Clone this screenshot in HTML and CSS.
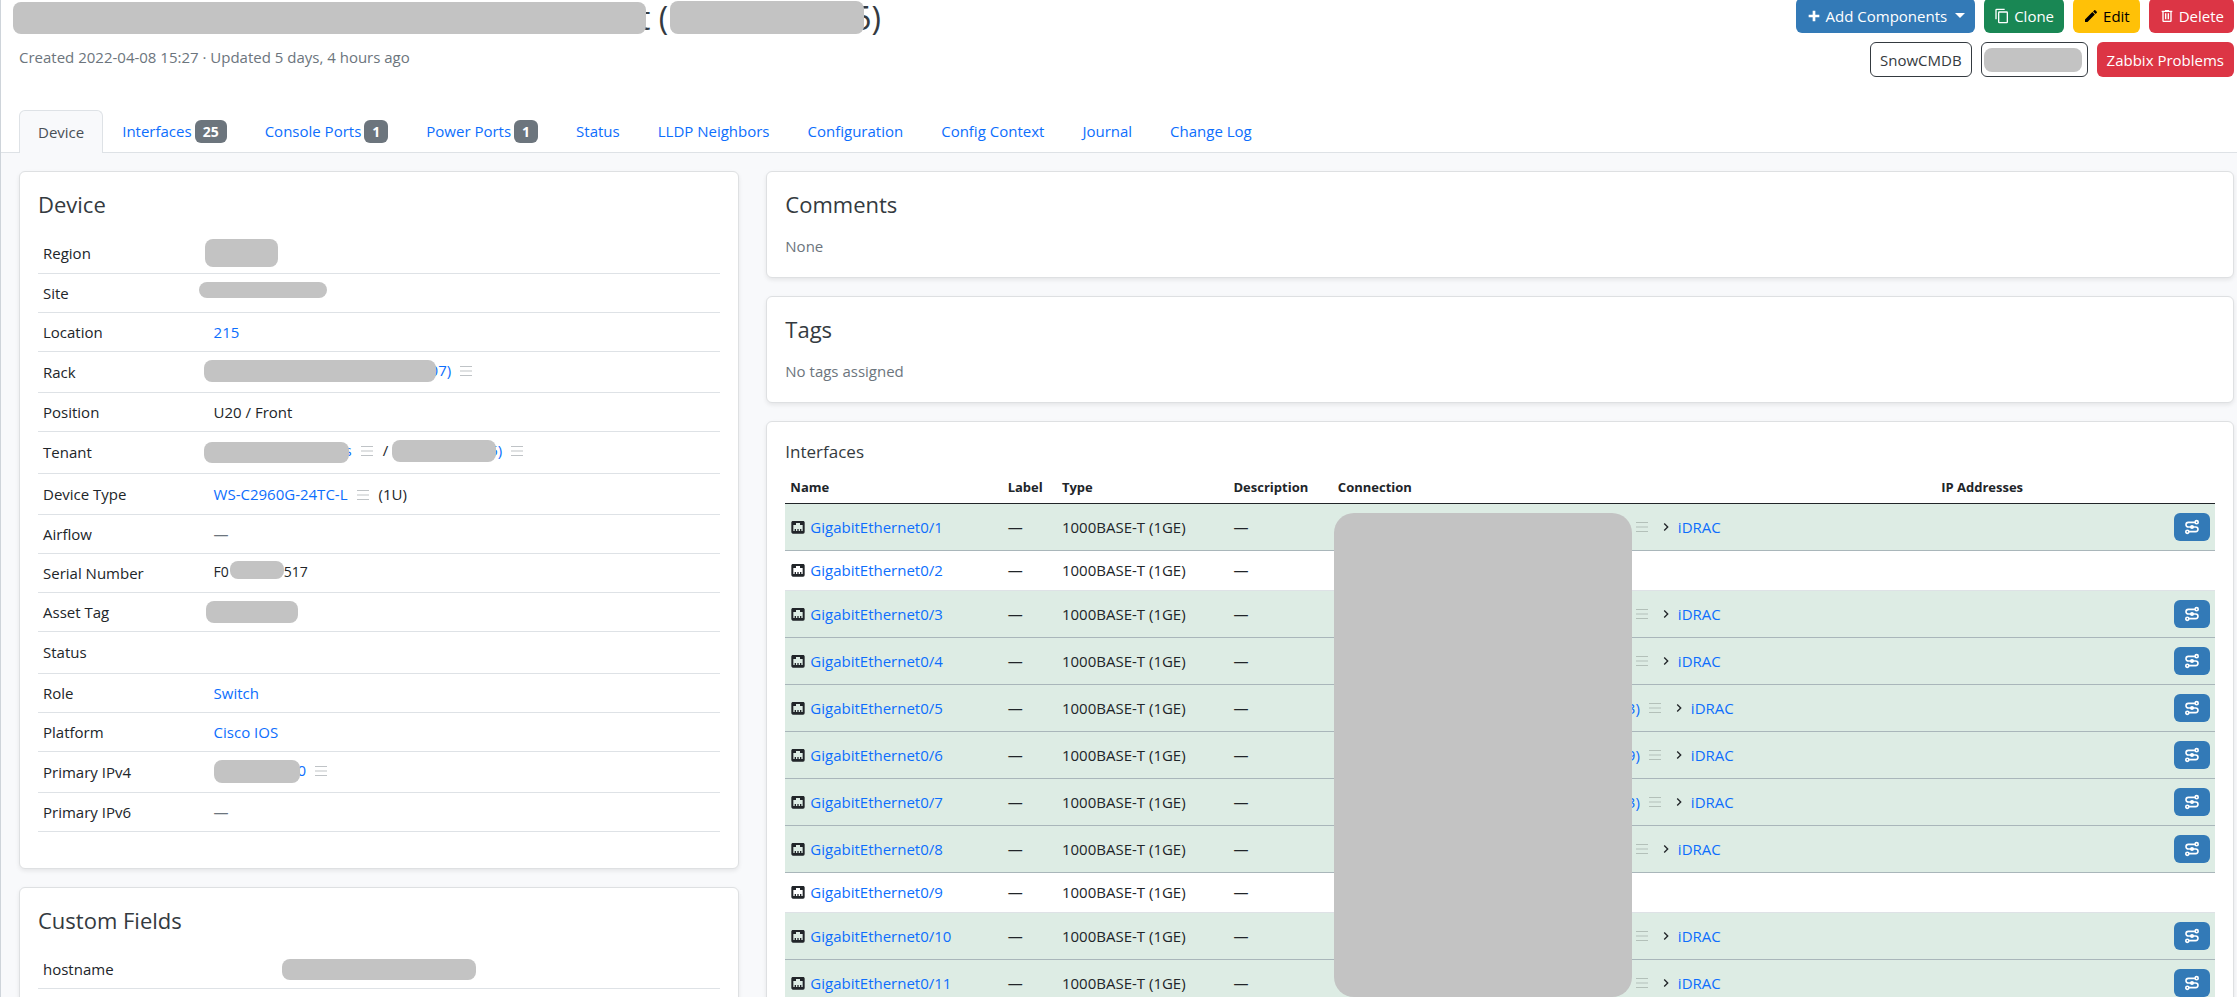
FILE: index.html
```html
<!DOCTYPE html>
<html lang="en">
<head>
<meta charset="utf-8">
<title>Device</title>
<link rel="stylesheet" href="styles.css">
</head>
<body>
<svg class="defs" aria-hidden="true">
  <symbol id="plus" viewBox="0 0 24 24"><path d="M20 14H14V20H10V14H4V10H10V4H14V10H20V14Z"/></symbol>
  <symbol id="copy" viewBox="0 0 24 24"><path d="M19,21H8V7H19M19,5H8A2,2 0 0,0 6,7V21A2,2 0 0,0 8,23H19A2,2 0 0,0 21,21V7A2,2 0 0,0 19,5M16,1H4A2,2 0 0,0 2,3V17H4V3H16V1Z"/></symbol>
  <symbol id="pencil" viewBox="0 0 24 24"><path d="M20.71,7.04C21.1,6.65 21.1,6 20.71,5.63L18.37,3.29C18,2.9 17.35,2.9 16.96,3.29L15.12,5.12L18.87,8.87M3,17.25V21H6.75L17.81,9.93L14.06,6.18L3,17.25Z"/></symbol>
  <symbol id="trash" viewBox="0 0 24 24"><path d="M9,3V4H4V6H5V19A2,2 0 0,0 7,21H17A2,2 0 0,0 19,19V6H20V4H15V3H9M7,6H17V19H7V6M9,8V17H11V8H9M13,8V17H15V8H13Z"/></symbol>
  <symbol id="ethernet" viewBox="0 0 24 24"><path d="M7,15H9V18H11V15H13V18H15V15H17V18H19V9H15V6H9V9H5V18H7V15M4.38,3H19.63C20.94,3 22,4.06 22,5.38V19.63A2.37,2.37 0 0,1 19.63,22H4.38C3.06,22 2,20.94 2,19.63V5.38C2,4.06 3.06,3 4.38,3Z"/></symbol>
  <symbol id="chevron" viewBox="0 0 24 24"><path d="M8.59,16.58L13.17,12L8.59,7.41L10,6L16,12L10,18L8.59,16.58Z"/></symbol>
  <symbol id="lines" viewBox="0 0 12 10"><path d="M0 0H12V1H0Z"/><path opacity=".5" d="M0 4H12V6H0Z"/><path d="M0 9H12V10H0Z"/></symbol>
  <symbol id="trace" viewBox="0 0 24 24"><g fill="none" stroke="currentColor" stroke-width="2.4"><path d="M16.5 5H6.500A3.500 3.500 0 0 0 6.500 12H17.500A3.500 3.500 0 0 1 17.500 19H7.500"/><circle cx="19" cy="4.800" r="2.300"/><circle cx="5" cy="19.200" r="2.300"/></g><circle cx="12" cy="12" r="3"/></symbol>
</svg>
<div class="page">
  <header class="top">
    <div class="heading">
      <h1><span class="mask mask-name"></span>t (<span class="mask mask-id"></span>5)</h1>
      <p class="muted">Created 2022-04-08 15:27 · Updated 5 days, 4 hours ago</p>
    </div>
    <div class="actions">
      <div class="buttons">
        <button class="btn blue"><svg class="icon"><use href="#plus"/></svg>Add Components<span class="caret"></span></button>
        <button class="btn green"><svg class="icon"><use href="#copy"/></svg>Clone</button>
        <button class="btn yellow"><svg class="icon"><use href="#pencil"/></svg>Edit</button>
        <button class="btn red"><svg class="icon"><use href="#trash"/></svg>Delete</button>
      </div>
      <div class="buttons">
        <a class="btn outline" href="#">SnowCMDB</a>
        <a class="btn outline masked" href="#" aria-label="External link"><span class="mask mask-button"></span></a>
        <a class="btn red" href="#">Zabbix Problems</a>
      </div>
    </div>
  </header>
  <nav class="tabs">
    <a class="tab active" href="#">Device</a>
    <a class="tab" href="#">Interfaces <span class="badge">25</span></a>
    <a class="tab" href="#">Console Ports <span class="badge">1</span></a>
    <a class="tab" href="#">Power Ports <span class="badge">1</span></a>
    <a class="tab" href="#">Status</a>
    <a class="tab" href="#">LLDP Neighbors</a>
    <a class="tab" href="#">Configuration</a>
    <a class="tab" href="#">Config Context</a>
    <a class="tab" href="#">Journal</a>
    <a class="tab" href="#">Change Log</a>
  </nav>
  <main class="content">
    <div class="column side">
      <section class="card device">
        <h2>Device</h2>
        <table class="attrs">
          <tr><th scope="row">Region</th><td><span class="mask mask-region"></span></td></tr>
          <tr><th scope="row">Site</th><td><span class="mask mask-site"></span></td></tr>
          <tr><th scope="row">Location</th><td><a href="#">215</a></td></tr>
          <tr class="tall"><th scope="row">Rack</th><td><span class="mask mask-rack"></span><a href="#">07)</a><svg class="grip"><use href="#lines"/></svg></td></tr>
          <tr><th scope="row">Position</th><td>U20 / Front</td></tr>
          <tr class="taller"><th scope="row">Tenant</th><td><span class="mask mask-group"></span><a href="#">s</a><svg class="grip"><use href="#lines"/></svg>/ <span class="mask mask-tenant"></span><a href="#">5)</a><svg class="grip"><use href="#lines"/></svg></td></tr>
          <tr class="tall"><th scope="row">Device Type</th><td><a href="#">WS-C2960G-24TC-L</a><svg class="grip"><use href="#lines"/></svg>(1U)</td></tr>
          <tr><th scope="row">Airflow</th><td class="muted">—</td></tr>
          <tr><th scope="row">Serial Number</th><td class="serial">F0<span class="mask mask-serial"></span>517</td></tr>
          <tr><th scope="row">Asset Tag</th><td><span class="mask mask-asset"></span></td></tr>
          <tr class="taller"><th scope="row">Status</th><td></td></tr>
          <tr><th scope="row">Role</th><td><a href="#">Switch</a></td></tr>
          <tr><th scope="row">Platform</th><td><a href="#">Cisco IOS</a></td></tr>
          <tr class="tall"><th scope="row">Primary IPv4</th><td><span class="mask mask-ip"></span><a href="#">0</a><svg class="grip"><use href="#lines"/></svg></td></tr>
          <tr><th scope="row">Primary IPv6</th><td class="muted">—</td></tr>
        </table>
      </section>
      <section class="card">
        <h2>Custom Fields</h2>
        <table class="attrs custom">
          <tr><th scope="row">hostname</th><td><span class="mask mask-host"></span></td></tr>
        </table>
      </section>
    </div>
    <div class="column wide">
      <section class="card">
        <h2>Comments</h2>
        <p class="muted note">None</p>
      </section>
      <section class="card">
        <h2>Tags</h2>
        <p class="muted note">No tags assigned</p>
      </section>
      <section class="card">
        <h3>Interfaces</h3>
        <div class="grid-wrap">
          <table class="grid">
            <colgroup><col class="c-name"><col class="c-label"><col class="c-type"><col class="c-desc"><col class="c-conn"><col class="c-ip"></colgroup>
            <thead><tr><th>Name</th><th>Label</th><th>Type</th><th>Description</th><th>Connection</th><th>IP Addresses</th></tr></thead>
            <tbody>
              <tr class="up"><td><svg class="port"><use href="#ethernet"/></svg><a href="#">GigabitEthernet0/1</a></td><td>—</td><td>1000BASE-T (1GE)</td><td>—</td><td><div class="link"><svg class="grip"><use href="#lines"/></svg><svg class="chev"><use href="#chevron"/></svg><a href="#">iDRAC</a></div></td><td class="end"><button class="trace" aria-label="Trace"><svg><use href="#trace"/></svg></button></td></tr>
              <tr><td><svg class="port"><use href="#ethernet"/></svg><a href="#">GigabitEthernet0/2</a></td><td>—</td><td>1000BASE-T (1GE)</td><td>—</td><td></td><td></td></tr>
              <tr class="up"><td><svg class="port"><use href="#ethernet"/></svg><a href="#">GigabitEthernet0/3</a></td><td>—</td><td>1000BASE-T (1GE)</td><td>—</td><td><div class="link"><svg class="grip"><use href="#lines"/></svg><svg class="chev"><use href="#chevron"/></svg><a href="#">iDRAC</a></div></td><td class="end"><button class="trace" aria-label="Trace"><svg><use href="#trace"/></svg></button></td></tr>
              <tr class="up"><td><svg class="port"><use href="#ethernet"/></svg><a href="#">GigabitEthernet0/4</a></td><td>—</td><td>1000BASE-T (1GE)</td><td>—</td><td><div class="link"><svg class="grip"><use href="#lines"/></svg><svg class="chev"><use href="#chevron"/></svg><a href="#">iDRAC</a></div></td><td class="end"><button class="trace" aria-label="Trace"><svg><use href="#trace"/></svg></button></td></tr>
              <tr class="up"><td><svg class="port"><use href="#ethernet"/></svg><a href="#">GigabitEthernet0/5</a></td><td>—</td><td>1000BASE-T (1GE)</td><td>—</td><td><div class="link long"><a href="#">3)</a><svg class="grip"><use href="#lines"/></svg><svg class="chev"><use href="#chevron"/></svg><a href="#">iDRAC</a></div></td><td class="end"><button class="trace" aria-label="Trace"><svg><use href="#trace"/></svg></button></td></tr>
              <tr class="up"><td><svg class="port"><use href="#ethernet"/></svg><a href="#">GigabitEthernet0/6</a></td><td>—</td><td>1000BASE-T (1GE)</td><td>—</td><td><div class="link long"><a href="#">9)</a><svg class="grip"><use href="#lines"/></svg><svg class="chev"><use href="#chevron"/></svg><a href="#">iDRAC</a></div></td><td class="end"><button class="trace" aria-label="Trace"><svg><use href="#trace"/></svg></button></td></tr>
              <tr class="up"><td><svg class="port"><use href="#ethernet"/></svg><a href="#">GigabitEthernet0/7</a></td><td>—</td><td>1000BASE-T (1GE)</td><td>—</td><td><div class="link long"><a href="#">3)</a><svg class="grip"><use href="#lines"/></svg><svg class="chev"><use href="#chevron"/></svg><a href="#">iDRAC</a></div></td><td class="end"><button class="trace" aria-label="Trace"><svg><use href="#trace"/></svg></button></td></tr>
              <tr class="up"><td><svg class="port"><use href="#ethernet"/></svg><a href="#">GigabitEthernet0/8</a></td><td>—</td><td>1000BASE-T (1GE)</td><td>—</td><td><div class="link"><svg class="grip"><use href="#lines"/></svg><svg class="chev"><use href="#chevron"/></svg><a href="#">iDRAC</a></div></td><td class="end"><button class="trace" aria-label="Trace"><svg><use href="#trace"/></svg></button></td></tr>
              <tr><td><svg class="port"><use href="#ethernet"/></svg><a href="#">GigabitEthernet0/9</a></td><td>—</td><td>1000BASE-T (1GE)</td><td>—</td><td></td><td></td></tr>
              <tr class="up"><td><svg class="port"><use href="#ethernet"/></svg><a href="#">GigabitEthernet0/10</a></td><td>—</td><td>1000BASE-T (1GE)</td><td>—</td><td><div class="link"><svg class="grip"><use href="#lines"/></svg><svg class="chev"><use href="#chevron"/></svg><a href="#">iDRAC</a></div></td><td class="end"><button class="trace" aria-label="Trace"><svg><use href="#trace"/></svg></button></td></tr>
              <tr class="up"><td><svg class="port"><use href="#ethernet"/></svg><a href="#">GigabitEthernet0/11</a></td><td>—</td><td>1000BASE-T (1GE)</td><td>—</td><td><div class="link"><svg class="grip"><use href="#lines"/></svg><svg class="chev"><use href="#chevron"/></svg><a href="#">iDRAC</a></div></td><td class="end"><button class="trace" aria-label="Trace"><svg><use href="#trace"/></svg></button></td></tr>
            </tbody>
          </table>
          <span class="mask-block"></span>
        </div>
      </section>
    </div>
  </main>
</div>
</body>
</html>
```
FILE: styles.css
```css
* { box-sizing: border-box; }
body {
  margin: 0;
  font: 15px/20px "Open Sans", "Noto Sans", sans-serif;
  color: #212529;
  background: #fff;
}
a { color: #0d6efd; text-decoration: none; }
button { font: inherit; cursor: pointer; }
svg { fill: currentColor; flex: none; }
h1, h2, h3, p { margin: 0; }
.defs { position: absolute; width: 0; height: 0; }
.muted { color: #6c757d; }

.page {
  height: 100vh;
  overflow: hidden;
  border-left: 1px solid #ced4da;
  display: flex;
  flex-direction: column;
}

/* Header */
.top {
  display: flex;
  justify-content: space-between;
  padding: 0 3px 0 18px;
  height: 110px;
  flex: none;
}
.heading h1 {
  display: flex;
  align-items: center;
  height: 35px;
  margin-left: -6px;
  font-size: 32px;
  line-height: 35px;
  font-weight: 500;
  color: #343a40;
  white-space: pre;
}
.heading p { margin-top: 12px; }
.actions {
  display: flex;
  flex-direction: column;
  align-items: flex-end;
  gap: 9px;
  margin-top: -2px;
}
.buttons { display: flex; gap: 9px; }
.btn {
  display: flex;
  align-items: center;
  height: 35px;
  padding: 0 9px;
  border: 1px solid transparent;
  border-radius: 6px;
  color: #fff;
}
.icon { width: 16px; height: 16px; margin-right: 4px; }
.blue { background: #337ab7; }
.green { background: #198754; }
.yellow { background: #ffc107; color: #000; }
.red { background: #dc3545; }
.outline { border-color: #343a40; color: #343a40; }
.masked { padding: 0 5px 0 2px; }
.caret {
  margin-left: 8px;
  border: 5px solid transparent;
  border-top-color: currentColor;
  border-bottom: 0;
}

/* Tabs */
.tabs {
  display: flex;
  height: 43px;
  flex: none;
  padding-left: 18px;
  border-bottom: 1px solid #dee2e6;
}
.tab {
  display: flex;
  align-items: center;
  gap: 3px;
  height: 42px;
  padding: 0 19px;
}
.tab.active {
  height: 43px;
  padding: 0 18px;
  color: #495057;
  background: #f8f9fb;
  border: 1px solid #dee2e6;
  border-bottom: 0;
  border-radius: 6px 6px 0 0;
}
.badge {
  padding: 2px 8px;
  border-radius: 6px;
  background: #6c757d;
  color: #fff;
  font-size: 14px;
  line-height: 19px;
  font-weight: 700;
}

/* Cards */
.content {
  flex: 1 0 auto;
  display: grid;
  grid-template-columns: repeat(12, minmax(0, 1fr));
  column-gap: 27px;
  align-items: start;
  padding: 18px 3px 18px 18px;
  background: #f8f9fb;
}
.column { display: grid; gap: 18px; }
.side { grid-column: span 4; }
.wide { grid-column: span 8; }
.card {
  padding: 18px;
  background: #fff;
  border: 1px solid #dee0e2;
  border-radius: 6px;
  box-shadow: 0 2px 4px rgba(0, 0, 0, .08);
}
.side .card { padding-bottom: 36px; }
h2 {
  font-size: 22px;
  line-height: 28px;
  font-weight: 500;
  color: #343a40;
}
h3 {
  font-size: 17px;
  line-height: 24px;
  font-weight: 400;
  color: #343a40;
}
.note { margin: 18px 0 3px; }

/* Attribute list */
.attrs {
  width: 100%;
  margin-top: 16px;
  border-collapse: collapse;
  table-layout: fixed;
}
.attrs th { width: 25%; font-weight: 400; text-align: left; }
.custom th { width: 35%; }
.attrs tr { height: 39px; border-bottom: 1px solid #dee2e6; }
.attrs .tall { height: 41px; }
.attrs .taller { height: 42px; }
.attrs th, .attrs td {
  padding: 0 5px;
  line-height: 20px;
  white-space: nowrap;
}
.serial { font-size: 14px; }
.grip {
  width: 12px;
  height: 10px;
  margin: 0 10px 0 9px;
  color: #bfc3c6;
}

/* Redaction patches */
.mask {
  position: relative;
  display: inline-block;
  vertical-align: middle;
  background: #c3c3c3;
  border-radius: 8px;
}
.mask-name { width: 633px; height: 32px; margin-right: -7px; }
.mask-id { width: 194px; height: 33px; margin: 0 -11px 0 2px; }
.mask-button { width: 98px; height: 24px; }
.mask-region { width: 73px; height: 28px; margin-left: -9px; }
.mask-site { width: 128px; height: 16px; margin: 0 0 6px -15px; }
.mask-rack { width: 232px; height: 22px; margin: 0 -6px 2px -10px; }
.mask-group { width: 145px; height: 21px; margin: 0 -4px 0 -10px; }
.mask-tenant { width: 104px; height: 22px; margin: 0 -7px 2px 0; }
.mask-serial { width: 54px; height: 18px; margin: 0 0 6px 1px; }
.mask-asset { width: 92px; height: 22px; margin-left: -8px; }
.mask-ip { width: 86px; height: 23px; margin-right: -2px; }
.mask-host { width: 194px; height: 21px; }

/* Interface table */
.grid-wrap { position: relative; margin-top: 8px; }
.grid {
  width: 100%;
  border-collapse: collapse;
  table-layout: fixed;
}
.c-name { width: 15.2%; }
.c-label { width: 3.8%; }
.c-type { width: 12%; }
.c-desc { width: 7.3%; }
.c-conn { width: 42.2%; }
.grid th {
  height: 31px;
  padding: 0 5px;
  border-bottom: 1px solid #212529;
  font-size: 13px;
  text-align: left;
  white-space: nowrap;
}
.grid td { padding: 0 5px; white-space: nowrap; }
.grid tbody tr { height: 40px; border-bottom: 1px solid #dee2e6; }
.grid tbody .up { height: 47px; background: #ddece4; border-bottom-color: #a9b6ba; }
.port { width: 16px; height: 16px; margin-right: 4px; vertical-align: -2px; }
.link { display: flex; align-items: center; margin-left: 289px; }
.link.long { margin-left: 289px; }
.link .chev { width: 16px; height: 16px; margin-right: 4px; }
.link .grip { color: #b3c0b9; }
.end { text-align: right; }
.trace {
  display: inline-flex;
  align-items: center;
  justify-content: center;
  width: 36px;
  height: 28px;
  padding: 0;
  border: 0;
  border-radius: 6px;
  background: #337ab7;
  color: #fff;
  vertical-align: middle;
}
.trace svg { width: 16px; height: 16px; }
.mask-block {
  position: absolute;
  top: 41px;
  left: 38.4%;
  width: 20.8%;
  height: 484px;
  border-radius: 20px;
  background: #c3c3c3;
}
```
